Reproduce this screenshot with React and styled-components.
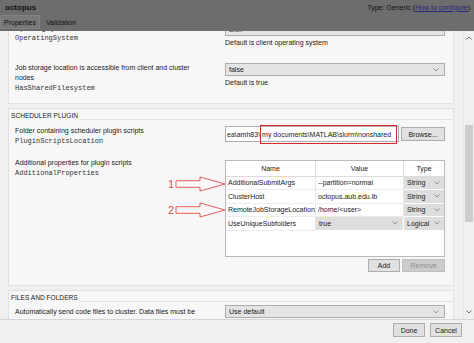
import React from "react";
import styled, { createGlobalStyle } from "styled-components";

const GlobalStyle = createGlobalStyle`
  html, body {
    margin: 0;
    padding: 0;
  }
  body {
    width: 474px;
    height: 343px;
    overflow: hidden;
    background: #f0f0f0;
    color: #1a1a1a;
    font-family: "Liberation Sans", Arial, sans-serif;
    font-size: 7px;
  }
`;

const Window = styled.div`
  width: 474px;
  height: 343px;
  display: flex;
  flex-direction: column;
`;

const Header = styled.div`
  height: 31px;
  flex-shrink: 0;
  display: flex;
  flex-direction: column;
  background: #6d6d6d;
`;

const TitleRow = styled.div`
  height: 15px;
  display: flex;
  align-items: center;
  justify-content: space-between;
  padding: 0 4px 0 5px;
`;

const Title = styled.span`
  font-size: 8px;
  font-weight: bold;
  color: #111;
`;

const TypeInfo = styled.span`
  color: #111;
`;

const Link = styled.a`
  color: #25257e;
  text-decoration: underline;
`;

const Tabs = styled.div`
  height: 16px;
  display: flex;
  align-items: flex-end;
  gap: 2px;
  padding: 0 0 2px 0;
`;

const Tab = styled.div`
  height: 12px;
  display: flex;
  align-items: center;
  padding: 0 3px;
  color: #111;
  background: ${(p) => (p.$active ? "#787878" : "transparent")};
  border: 1px solid ${(p) => (p.$active ? "#828282" : "transparent")};
`;

const Main = styled.div`
  flex: 1;
  min-height: 0;
  display: flex;
`;

const Viewport = styled.div`
  flex: 1;
  overflow: hidden;
  background: #f0f0f0;
`;

const Scroller = styled.div`
  margin-top: -9px;
  padding: 0 9px 0 8px;
  display: flex;
  flex-direction: column;
  gap: 4px;
`;

const Card = styled.div`
  border: 1px solid #e1e1e1;
  background: #f7f7f7;
  display: flex;
  flex-direction: column;
`;

const HeadingRow = styled.div`
  height: 12px;
  display: flex;
  align-items: flex-end;
  padding-left: 2px;
`;

const HeadingText = styled.span`
  line-height: 10px;
  font-size: 6.6px;
  color: #1a1a1a;
  padding-right: 2px;
`;

const Rule = styled.div`
  flex: 1;
  border-top: 1px solid #e1e1e1;
  margin-bottom: 1px;
`;

const Body = styled.div`
  display: flex;
  flex-direction: column;
  gap: ${(p) => p.$gap || 0}px;
  padding: ${(p) => p.$top || 0}px 8px ${(p) => p.$bottom || 0}px 6px;
`;

const Row = styled.div`
  position: relative;
  display: grid;
  grid-template-columns: 1fr 220px;
  column-gap: 6px;
  align-items: start;
`;

const Label = styled.div`
  padding-top: ${(p) => p.$offset || 0}px;
  line-height: 10px;
`;

const Mono = styled.div`
  font-family: "Liberation Mono", "Courier New", monospace;
  font-size: 7px;
  color: #333;
  line-height: 10px;
`;

const Control = styled.div`
  display: flex;
  flex-direction: column;
  padding-top: ${(p) => p.$offset || 0}px;
`;

const Select = styled.div`
  height: 13px;
  box-sizing: border-box;
  display: flex;
  align-items: center;
  justify-content: space-between;
  padding: 0 5px 0 3px;
  background: #e4e4e4;
  border: 1px solid #adadad;
`;

const Hint = styled.div`
  margin-top: 2px;
  line-height: 10px;
`;

const Chevron = ({ color = "#8a8a8a", up }) => (
  <svg width="6" height="4" viewBox="0 0 6 4">
    <polyline
      points={up ? "0.5,3.5 3,1 5.5,3.5" : "0.5,0.5 3,3 5.5,0.5"}
      fill="none"
      stroke={color}
      strokeWidth="0.9"
    />
  </svg>
);

const PathRow = styled.div`
  display: flex;
  align-items: center;
  gap: 2px;
`;

const PathInput = styled.div`
  width: 174px;
  height: 16px;
  box-sizing: border-box;
  display: flex;
  align-items: center;
  padding-left: 1px;
  white-space: nowrap;
  background: #fff;
  border: 1px solid #adadad;
`;

const Highlight = styled.span`
  height: 19px;
  box-sizing: border-box;
  display: inline-flex;
  align-items: center;
  padding: 0 5px 0 1px;
  border: 1.5px solid #d42a2f;
`;

const Button = styled.div`
  width: ${(p) => p.$w}px;
  height: ${(p) => p.$h || 13}px;
  box-sizing: border-box;
  display: flex;
  align-items: center;
  justify-content: center;
  background: ${(p) => (p.$disabled ? "#cccccc" : "#e1e1e1")};
  border: 1px solid ${(p) => (p.$disabled ? "#bfbfbf" : "#adadad")};
  color: ${(p) => (p.$disabled ? "#8d8d8d" : "#1a1a1a")};
`;

const Table = styled.div`
  margin-top: 2px;
  height: 97px;
  box-sizing: border-box;
  background: #fff;
  border: 1px solid #b9b9b9;
  display: grid;
  grid-template-columns: 90px 88px 1fr;
  grid-auto-rows: 13.5px;
  grid-template-rows: 15.5px;
  align-content: start;
`;

const HeadCell = styled.div`
  display: flex;
  align-items: center;
  justify-content: center;
  border-right: ${(p) => (p.$last ? "none" : "1px solid #dcdcdc")};
  border-bottom: 1px solid #dcdcdc;
`;

const Cell = styled.div`
  display: flex;
  align-items: center;
  padding-left: 2px;
  white-space: nowrap;
  overflow: hidden;
  border-right: 1px solid #e6e6e6;
  border-bottom: 1px solid #ececec;
`;

const DropCell = styled.div`
  display: flex;
  align-items: center;
  justify-content: space-between;
  padding: 0 4px 0 3px;
  margin: 0 ${(p) => (p.$wide ? 1 : 0)}px 1px 0;
  background: #dedede;
  border-right: ${(p) => (p.$wide ? "1px solid #e6e6e6" : "none")};
`;

const ButtonRow = styled.div`
  margin-top: 2px;
  display: flex;
  justify-content: flex-end;
  gap: 2px;
`;

const Annotation = styled.svg`
  position: absolute;
  left: 145px;
  top: 12px;
  overflow: visible;
`;

const Scrollbar = styled.div`
  width: 10px;
  flex-shrink: 0;
  display: flex;
  flex-direction: column;
  align-items: center;
  background: #f0f0f0;
  border-left: 1px solid #e4e4e4;
`;

const ScrollArrow = styled.div`
  height: 10px;
  display: flex;
  align-items: center;
  justify-content: center;
  margin: ${(p) => (p.$down ? "0 0 2px 0" : "2px 0 0 0")};
`;

const Track = styled.div`
  flex: 1;
  width: 100%;
  display: flex;
  justify-content: center;
`;

const Thumb = styled.div`
  width: 8px;
  height: 97px;
  margin-top: 82px;
  background: #cdcdcd;
`;

const Footer = styled.div`
  height: 24px;
  flex-shrink: 0;
  box-sizing: border-box;
  display: flex;
  justify-content: flex-end;
  align-items: flex-start;
  gap: 5px;
  padding: 3px 12px 0 0;
  background: #f0f0f0;
  border-top: 1px solid #d6d6d6;
`;

const Arrow = ({ y, n }) => (
  <g>
    <text
      x="8"
      y={y + 4}
      fontSize="11"
      fill="#d9534f"
      fontFamily="'Liberation Sans', Arial, sans-serif"
    >
      {n}
    </text>
    <polygon
      points={`16,${y - 3.3} 40,${y - 3.3} 40,${y - 7} 65,${y} 40,${y + 7} 40,${y + 3.3} 16,${y + 3.3}`}
      fill="none"
      stroke="#e0605c"
      strokeWidth="1"
    />
  </g>
);

const properties = [
  { name: "AdditionalSubmitArgs", value: "--partition=normal", type: "String" },
  { name: "ClusterHost", value: "octopus.aub.edu.lb", type: "String" },
  { name: "RemoteJobStorageLocation", value: "/home/<user>", type: "String" },
  { name: "UseUniqueSubfolders", value: "true", type: "Logical", drop: true },
];

export default function App() {
  return (
    <Window>
      <GlobalStyle />
      <Header>
        <TitleRow>
          <Title>octopus</Title>
          <TypeInfo>
            Type: Generic (<Link>How to configure</Link>)
          </TypeInfo>
        </TitleRow>
        <Tabs>
          <Tab $active>Properties</Tab>
          <Tab>Validation</Tab>
        </Tabs>
      </Header>

      <Main>
        <Viewport>
          <Scroller>
            <Card>
              <Body $gap={15} $bottom={10}>
                <Row>
                  <Label>
                    <div>Operating system of the cluster</div>
                    <Mono>OperatingSystem</Mono>
                  </Label>
                  <Control>
                    <Select>
                      <span>unix</span>
                      <Chevron />
                    </Select>
                    <Hint>Default is client operating system</Hint>
                  </Control>
                </Row>
                <Row>
                  <Label>
                    <div>Job storage location is accessible from client and cluster</div>
                    <div>nodes</div>
                    <Mono>HasSharedFilesystem</Mono>
                  </Label>
                  <Control>
                    <Select>
                      <span>false</span>
                      <Chevron />
                    </Select>
                    <Hint>Default is true</Hint>
                  </Control>
                </Row>
              </Body>
            </Card>

            <Card>
              <HeadingRow>
                <HeadingText>SCHEDULER PLUGIN</HeadingText>
                <Rule />
              </HeadingRow>
              <Body $top={5} $gap={12} $bottom={13}>
                <Row>
                  <Label>
                    <div>Folder containing scheduler plugin scripts</div>
                    <Mono>PluginScriptsLocation</Mono>
                  </Label>
                  <PathRow>
                    <PathInput>
                      <span>ea\amh83\</span>
                      <Highlight>my documents\MATLAB\slurm\nonshared</Highlight>
                    </PathInput>
                    <Button $w={44} $h={14}>Browse...</Button>
                  </PathRow>
                </Row>
                <Row>
                  <Label>
                    <div>Additional properties for plugin scripts</div>
                    <Mono>AdditionalProperties</Mono>
                  </Label>
                  <Control>
                    <Table>
                      <HeadCell>Name</HeadCell>
                      <HeadCell>Value</HeadCell>
                      <HeadCell $last>Type</HeadCell>
                      {properties.map((p) => (
                        <React.Fragment key={p.name}>
                          <Cell>{p.name}</Cell>
                          {p.drop ? (
                            <DropCell $wide>
                              <span>{p.value}</span>
                              <Chevron />
                            </DropCell>
                          ) : (
                            <Cell>{p.value}</Cell>
                          )}
                          <DropCell>
                            <span>{p.type}</span>
                            <Chevron />
                          </DropCell>
                        </React.Fragment>
                      ))}
                    </Table>
                    <ButtonRow>
                      <Button $w={32}>Add</Button>
                      <Button $w={43} $disabled>
                        Remove
                      </Button>
                    </ButtonRow>
                  </Control>
                  <Annotation width="70" height="52" viewBox="0 0 70 52">
                    <Arrow y={14} n="1" />
                    <Arrow y={40} n="2" />
                  </Annotation>
                </Row>
              </Body>
            </Card>

            <Card>
              <HeadingRow>
                <HeadingText>FILES AND FOLDERS</HeadingText>
                <Rule />
              </HeadingRow>
              <Body $top={2} $bottom={10}>
                <Row>
                  <Label $offset={2}>
                    <div>Automatically send code files to cluster. Data files must be</div>
                    <div>listed below.</div>
                    <Mono>AutoAttachFiles</Mono>
                  </Label>
                  <Control>
                    <Select>
                      <span>Use default</span>
                      <Chevron />
                    </Select>
                    <Hint>Default is true</Hint>
                  </Control>
                </Row>
              </Body>
            </Card>
          </Scroller>
        </Viewport>
        <Scrollbar>
          <ScrollArrow>
            <Chevron up color="#606060" />
          </ScrollArrow>
          <Track>
            <Thumb />
          </Track>
          <ScrollArrow $down>
            <Chevron color="#606060" />
          </ScrollArrow>
        </Scrollbar>
      </Main>

      <Footer>
        <Button $w={32} $h={14}>Done</Button>
        <Button $w={32} $h={14}>Cancel</Button>
      </Footer>
    </Window>
  );
}
